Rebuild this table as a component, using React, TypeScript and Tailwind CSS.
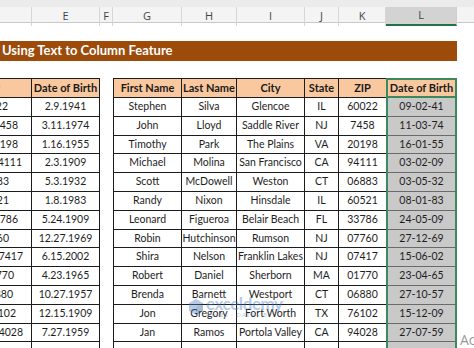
import React from "react";

const GRID =
  "grid grid-cols-[74px_68px_13px_69px_55px_68px_34px_47px_71px_1fr] -ml-[42px] w-[516px]";

const letters = ["D", "E", "F", "G", "H", "I", "J", "K", "L", ""];

interface Row {
  zip: string;
  zipPad: string;
  dob: string;
  first: string;
  last: string;
  city: string;
  state: string;
  zip2: string;
  date: string;
}

const rows: Row[] = [
  { zip: "60022", zipPad: "pr-[23px]", dob: "2.9.1941", first: "Stephen", last: "Silva", city: "Glencoe", state: "IL", zip2: "60022", date: "09-02-41" },
  { zip: "07458", zipPad: "pr-[13px]", dob: "3.11.1974", first: "John", last: "Lloyd", city: "Saddle River", state: "NJ", zip2: "7458", date: "11-03-74" },
  { zip: "20198", zipPad: "pr-[13px]", dob: "1.16.1955", first: "Timothy", last: "Park", city: "The Plains", state: "VA", zip2: "20198", date: "16-01-55" },
  { zip: "94111", zipPad: "pr-[9px]", dob: "2.3.1909", first: "Michael", last: "Molina", city: "San Francisco", state: "CA", zip2: "94111", date: "03-02-09" },
  { zip: "06883", zipPad: "pr-[22px]", dob: "5.3.1932", first: "Scott", last: "McDowell", city: "Weston", state: "CT", zip2: "06883", date: "03-05-32" },
  { zip: "60521", zipPad: "pr-[22px]", dob: "1.8.1983", first: "Randy", last: "Nixon", city: "Hinsdale", state: "IL", zip2: "60521", date: "08-01-83" },
  { zip: "33786", zipPad: "pr-[13px]", dob: "5.24.1909", first: "Leonard", last: "Figueroa", city: "Belair Beach", state: "FL", zip2: "33786", date: "24-05-09" },
  { zip: "07760", zipPad: "pr-[22px]", dob: "12.27.1969", first: "Robin", last: "Hutchinson", city: "Rumson", state: "NJ", zip2: "07760", date: "27-12-69" },
  { zip: "07417", zipPad: "pr-[8px]", dob: "6.15.2002", first: "Shira", last: "Nelson", city: "Franklin Lakes", state: "NJ", zip2: "07417", date: "15-06-02" },
  { zip: "01770", zipPad: "pr-[17px]", dob: "4.23.1965", first: "Robert", last: "Daniel", city: "Sherborn", state: "MA", zip2: "01770", date: "23-04-65" },
  { zip: "06880", zipPad: "pr-[18px]", dob: "10.27.1957", first: "Brenda", last: "Barnett", city: "Westport", state: "CT", zip2: "06880", date: "27-10-57" },
  { zip: "76102", zipPad: "pr-[15px]", dob: "12.15.1909", first: "Jon", last: "Gregory", city: "Fort Worth", state: "TX", zip2: "76102", date: "15-12-09" },
  { zip: "94028", zipPad: "pr-[8px]", dob: "7.27.1959", first: "Jan", last: "Ramos", city: "Portola Valley", state: "CA", zip2: "94028", date: "27-07-59" },
];

const cell = "flex items-center justify-center whitespace-nowrap overflow-hidden";
const line = "border-[#1c1c1c]";

function DataRow({ r }: { r?: Row }) {
  return (
    <div className={`${GRID} h-[18.8px] text-[10.5px] text-[#1e1e1e]`}>
      <div className={`flex items-center justify-end whitespace-nowrap border-r border-b ${line} ${r ? r.zipPad : ""}`}>
        {r?.zip}
      </div>
      <div className={`${cell} border-r border-b ${line}`}>{r?.dob}</div>
      <div />
      <div className={`${cell} border-l border-r border-b ${line}`}>{r?.first}</div>
      <div className={`${cell} border-r border-b ${line}`}>{r?.last}</div>
      <div className={`${cell} border-r border-b ${line}`}>{r?.city}</div>
      <div className={`${cell} border-r border-b ${line}`}>{r?.state}</div>
      <div className={`${cell} border-b ${line}`}>{r?.zip2}</div>
      <div className={`${cell} bg-[#c9c9c9] border-x-2 border-x-[#3a8a5e] border-b border-b-[#6a6a6a]`}>
        {r?.date}
      </div>
      <div />
    </div>
  );
}

export default function App() {
  return (
    <div className="relative w-[474px] h-[348px] overflow-hidden bg-white font-['Lato',sans-serif]">
      {/* column letters */}
      <div className="h-[7px] bg-[#ebebeb]" />
      <div className={`${GRID} h-[16px] bg-[#f4f4f4] border-b border-[#c9c9c9] text-[11px] text-[#444] font-['Open_Sans',sans-serif]`}>
        {letters.map((l, i) => (
          <div
            key={i}
            className={
              l === "L"
                ? "flex items-center justify-center bg-[#d3d3d3] border-r border-[#cfcfcf] border-b-2 border-b-[#217346]"
                : l
                ? "flex items-center justify-center border-r border-[#d6d6d6]"
                : ""
            }
          >
            {l === "D" ? "" : l}
          </div>
        ))}
      </div>

      <div className="h-[18px]" />

      {/* title */}
      <div className="h-[20px] w-[457px] bg-[#9c4b0b] flex items-center pl-[2px] text-white font-bold text-[13px]">
        Using Text to Column Feature
      </div>

      <div className="h-[17px]" />

      {/* table header */}
      <div className={`${GRID} h-[20px] text-[11px] font-bold text-[#1a1a1a]`}>
        <div className={`flex items-center justify-end whitespace-nowrap pr-[31px] bg-[#f9c89e] border-t border-r border-b ${line}`}>
          ZIP
        </div>
        <div className={`${cell} bg-[#f9c89e] border-t border-r border-b ${line}`}>Date of Birth</div>
        <div />
        <div className={`${cell} bg-[#f9c89e] border-t border-l border-r border-b ${line}`}>First Name</div>
        <div className={`${cell} bg-[#f9c89e] border-t border-r border-b ${line}`}>Last Name</div>
        <div className={`${cell} bg-[#f9c89e] border-t border-r border-b ${line}`}>City</div>
        <div className={`${cell} bg-[#f9c89e] border-t border-r border-b ${line}`}>State</div>
        <div className={`${cell} bg-[#f9c89e] border-t border-b ${line}`}>ZIP</div>
        <div className={`${cell} bg-[#f9c89e] border-2 border-[#3a8a5e]`}>Date of Birth</div>
        <div />
      </div>

      {rows.map((r, i) => (
        <DataRow key={i} r={r} />
      ))}
      <DataRow />

      {/* watermark */}
      <div className="absolute left-[189px] top-[295px] flex items-center gap-[3px] opacity-40">
        <svg width="14" height="16" viewBox="0 0 14 16">
          <path d="M7 0 L14 4 L14 12 L7 16 L0 12 L0 4 Z" fill="#4a7bbf" />
          <path d="M7 8 L14 4 L14 12 L7 16 Z" fill="#2e5a99" />
        </svg>
        <div className="flex flex-col leading-none">
          <span className="text-[17px] font-bold text-[#4a7bbf] tracking-tight">exceldemy</span>
          <span className="text-[6px] text-[#4a7bbf] tracking-[1px]">EXCEL · DATA · BI</span>
        </div>
      </div>

      <div className="absolute left-[460px] top-[329px] text-[14px] text-[#9a9a9a] whitespace-nowrap font-['Open_Sans',sans-serif]">
        Activate Windows
      </div>
    </div>
  );
}
